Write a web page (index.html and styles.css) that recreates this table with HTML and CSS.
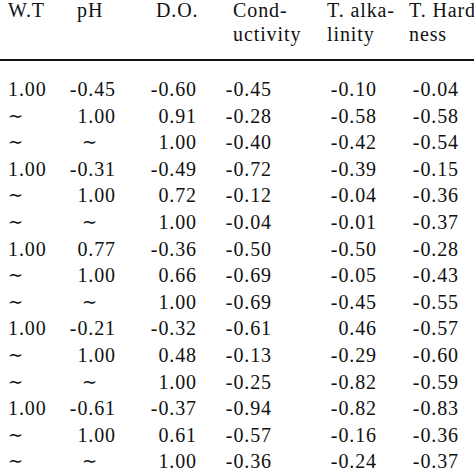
FILE: index.html
```html
<!DOCTYPE html>
<html lang="en">
<head>
  <meta charset="UTF-8">
  <title>Correlation Matrix</title>
  <link rel="stylesheet" href="styles.css">
</head>
<body>

  <table class="matrix">
    <colgroup>
      <col class="c1"><col class="c2"><col class="c3"><col class="c4"><col class="c5"><col class="c6">
    </colgroup>
    <thead>
      <tr>
        <th class="h1">W.T</th>
        <th class="h2">pH</th>
        <th class="h3">D.O.</th>
        <th class="h4">Cond-<br>uctivity</th>
        <th class="h5">T. alka-<br>linity</th>
        <th class="h6">T. Hard-<br>ness</th>
      </tr>
    </thead>
    <tbody id="rows"></tbody>
  </table>

  <script>
    const data = [
      ["1.00", "-0.45", "-0.60", "-0.45", "-0.10", "-0.04"],
      ["~", "1.00", "0.91", "-0.28", "-0.58", "-0.58"],
      ["~", "~", "1.00", "-0.40", "-0.42", "-0.54"],
      ["1.00", "-0.31", "-0.49", "-0.72", "-0.39", "-0.15"],
      ["~", "1.00", "0.72", "-0.12", "-0.04", "-0.36"],
      ["~", "~", "1.00", "-0.04", "-0.01", "-0.37"],
      ["1.00", "0.77", "-0.36", "-0.50", "-0.50", "-0.28"],
      ["~", "1.00", "0.66", "-0.69", "-0.05", "-0.43"],
      ["~", "~", "1.00", "-0.69", "-0.45", "-0.55"],
      ["1.00", "-0.21", "-0.32", "-0.61", "0.46", "-0.57"],
      ["~", "1.00", "0.48", "-0.13", "-0.29", "-0.60"],
      ["~", "~", "1.00", "-0.25", "-0.82", "-0.59"],
      ["1.00", "-0.61", "-0.37", "-0.94", "-0.82", "-0.83"],
      ["~", "1.00", "0.61", "-0.57", "-0.16", "-0.36"],
      ["~", "~", "1.00", "-0.36", "-0.24", "-0.37"]
    ];

    const body = document.getElementById("rows");

    data.forEach(function (row) {
      const tr = document.createElement("tr");
      row.forEach(function (value) {
        const td = document.createElement("td");
        if (value === "~") {
          td.className = "same";
          td.textContent = "\u223C";
        } else {
          td.textContent = value;
        }
        tr.appendChild(td);
      });
      body.appendChild(tr);
    });
  </script>

</body>
</html>
```

FILE: styles.css
```css
body {
  margin: 0;
  background: #fff;
  overflow: hidden;
  font-family: "Liberation Serif", "Times New Roman", serif;
  color: #111;
}

.matrix {
  border-collapse: collapse;
  table-layout: fixed;
  width: 474px;
  margin-top: -2px;
  font-size: 20px;
  letter-spacing: 0.9px;
  white-space: nowrap;
}

.c1 { width: 60px; }
.c2 { width: 70px; }
.c3 { width: 80px; }
.c4 { width: 80px; }
.c5 { width: 105px; }
.c6 { width: 79px; }

th {
  font-weight: normal;
  text-align: left;
  vertical-align: top;
  line-height: 24px;
  padding: 0 0 13px 0;
  border-bottom: 2px solid #111;
}

.h1 { padding-left: 8px; }
.h2 { padding-left: 17px; }
.h3 { padding-left: 26px; }
.h4 { padding-left: 23px; }
.h5 { padding-left: 37px; }
.h6 { padding-left: 14px; }

td {
  text-align: right;
  line-height: 26.6px;
  padding: 0 16px 0 0;
}

tbody tr:first-child td {
  padding-top: 15px;
}

td:nth-child(1) {
  text-align: left;
  padding: 0 0 0 8px;
}

td:nth-child(2) { padding-right: 14px; }
td:nth-child(3) { padding-right: 13px; }
td:nth-child(4) { padding-right: 18px; }
td:nth-child(5) { padding-right: 18px; }
td:nth-child(6) { padding-right: 15px; }

td.same {
  font-size: 18px;
}

td:nth-child(2).same {
  padding-right: 32px;
}
```
